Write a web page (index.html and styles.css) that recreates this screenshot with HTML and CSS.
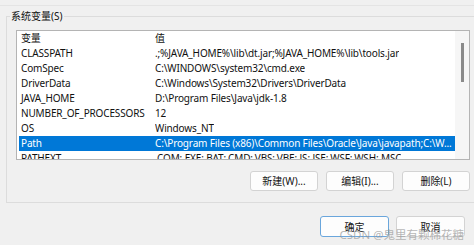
FILE: index.html
```html
<!DOCTYPE html>
<html lang="zh-CN">
<head>
    <meta charset="UTF-8">
    <meta name="viewport" content="width=device-width, initial-scale=1.0">
    <title>环境变量</title>
    <link rel="stylesheet" href="styles.css">
</head>
<body>
    <div class="top-edge"></div>
    <fieldset class="group">
        <legend>系统变量(S)</legend>
        <div class="list">
            <div class="rows">
                <div class="row header"><span class="name">变量</span><span class="value">值</span></div>
                <div class="row"><span class="name">CLASSPATH</span><span class="value">.;%JAVA_HOME%\lib\dt.jar;%JAVA_HOME%\lib\tools.jar</span></div>
                <div class="row"><span class="name">ComSpec</span><span class="value">C:\WINDOWS\system32\cmd.exe</span></div>
                <div class="row"><span class="name">DriverData</span><span class="value">C:\Windows\System32\Drivers\DriverData</span></div>
                <div class="row"><span class="name">JAVA_HOME</span><span class="value">D:\Program Files\Java\jdk-1.8</span></div>
                <div class="row"><span class="name">NUMBER_OF_PROCESSORS</span><span class="value">12</span></div>
                <div class="row"><span class="name">OS</span><span class="value">Windows_NT</span></div>
                <div class="row selected"><span class="name">Path</span><span class="value">C:\Program Files (x86)\Common Files\Oracle\Java\javapath;C:\W...</span></div>
                <div class="row"><span class="name">PATHEXT</span><span class="value">.COM;.EXE;.BAT;.CMD;.VBS;.VBE;.JS;.JSE;.WSF;.WSH;.MSC</span></div>
            </div>
            <div class="scrollbar"><div class="thumb"></div></div>
        </div>
        <div class="actions">
            <button>新建(W)...</button>
            <button>编辑(I)...</button>
            <button>删除(L)</button>
        </div>
    </fieldset>
    <div class="footer">
        <button class="default">确定</button>
        <button>取消</button>
    </div>
    <div class="watermark">CSDN @鬼里有颗棉花糖</div>
</body>
</html>
```

FILE: styles.css
```css
* {
    box-sizing: border-box;
}
body {
    margin: 0;
    width: 474px;
    height: 245px;
    overflow: hidden;
    position: relative;
    background: #f0f0f0;
    color: #111;
    font-family: "Noto Sans", "Noto Sans CJK SC", sans-serif;
    font-size: 10px;
}
.top-edge {
    height: 6px;
    border-bottom: 1px solid #e4e4e4;
}
.group {
    margin: 2px -6px 0 6px;
    padding: 0 0 11px 9px;
    border: 1px solid #dcdcdc;
    min-width: 0;
}
.group legend {
    margin-left: -6px;
    padding: 0 1px;
    line-height: 16px;
}
.list {
    margin-top: 6px;
    width: 454px;
    height: 130px;
    border: 1px solid #b4b4b4;
    background: #fff;
    display: flex;
    overflow: hidden;
}
.rows {
    flex: 1;
    margin-left: 2px;
    overflow: hidden;
}
.row {
    display: flex;
    height: 15px;
    line-height: 15px;
    white-space: nowrap;
}
.row .name {
    width: 136px;
    padding-left: 2px;
    flex-shrink: 0;
    letter-spacing: -0.15px;
}
.row .value {
    overflow: hidden;
    letter-spacing: -0.15px;
}
.row.selected {
    background: #0078d7;
    color: #fff;
}
.scrollbar {
    width: 14px;
    background: #f6f6f6;
    padding: 12px 0 0 6px;
}
.thumb {
    width: 3px;
    height: 39px;
    background: #8a8a8a;
}
.actions {
    width: 454px;
    margin-top: 11px;
    display: flex;
    justify-content: flex-end;
    gap: 8px;
}
button {
    font-family: inherit;
    font-size: 10px;
    color: #111;
    background: #fdfdfd;
    border: 1px solid #d3d3d3;
    border-radius: 3px;
    padding: 0;
    width: 68px;
    height: 20px;
    line-height: 18px;
}
.footer {
    margin-top: 13px;
    padding-right: 9px;
    display: flex;
    justify-content: flex-end;
    gap: 7px;
}
.footer button {
    width: 69px;
    height: 21px;
}
.footer button.default {
    border-color: #6aa6dc;
}
.watermark {
    position: absolute;
    right: 10px;
    bottom: 3px;
    font-size: 11.5px;
    color: rgba(150, 150, 150, 0.7);
    white-space: nowrap;
}
```
